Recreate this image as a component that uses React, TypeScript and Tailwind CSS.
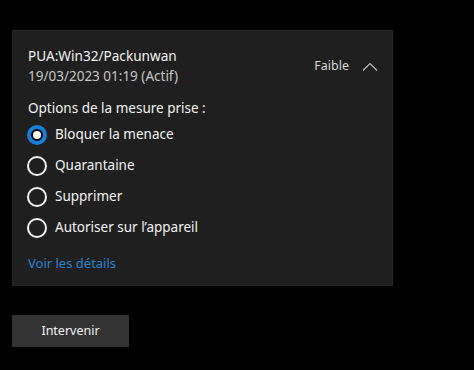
import React from 'react';

const options = ['Bloquer la menace', 'Quarantaine', 'Supprimer', 'Autoriser sur l\u2019appareil'];

const Radio: React.FC<{ checked?: boolean }> = ({ checked }) =>
  checked ? (
    <span className="-ml-px flex h-5 w-5 shrink-0 items-center justify-center rounded-full border-[4px] border-[#1a7fd4] bg-black">
      <span className="h-2 w-2 rounded-full bg-white" />
    </span>
  ) : (
    <span className="-ml-px h-5 w-5 shrink-0 rounded-full border-2 border-[#f2f2f2]" />
  );

export default function App() {
  return (
    <div
      className="h-[370px] w-[474px] bg-black pl-3 pt-[30px] text-[#f2f2f2]"
      style={{ fontFamily: '"Noto Sans", "Open Sans", sans-serif' }}
    >
      <div className="h-[256px] w-[381px] border border-[#262626] bg-[#1f1f1f] pl-[15px] pr-[14px] pt-[15px]">
        <div className="flex items-center justify-between">
          <div>
            <p className="text-[13.6px] leading-5">PUA:Win32/Packunwan</p>
            <p className="text-[13.5px] leading-5 text-[#c6c6c6]">19/03/2023 01:19 (Actif)</p>
          </div>
          <div className="flex items-center gap-[13px]">
            <span className="text-[12.5px] text-[#d8d8d8]">Faible</span>
            <svg width="16" height="9" viewBox="0 0 16 9" fill="none">
              <path d="M1 8.5 L8 1.5 L15 8.5" stroke="#bdbdbd" strokeWidth="1.2" />
            </svg>
          </div>
        </div>
        <p className="mt-3 text-[13.5px] leading-5">Options de la mesure prise :</p>
        <div className="mt-px flex flex-col">
          {options.map((o, i) => (
            <div key={o} className="flex h-[31px] items-center gap-2">
              <Radio checked={i === 0} />
              <span className="text-[13.5px]">{o}</span>
            </div>
          ))}
        </div>
        <p className="mt-[10px] text-[13px] leading-5 text-[#2b86d1]">Voir les détails</p>
      </div>
      <button className="mt-[29px] flex h-8 w-[117px] items-center justify-center bg-[#333333] text-[12.5px] text-[#f2f2f2]">
        Intervenir
      </button>
    </div>
  );
}
